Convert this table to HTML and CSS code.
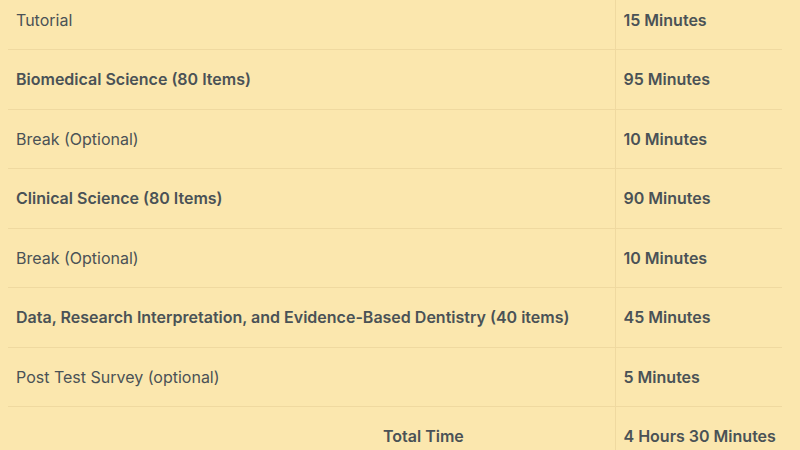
FILE: index.html
```html
<!DOCTYPE html>
<html>
<head>
<meta charset="utf-8">
<link rel="stylesheet" href="styles.css">
</head>
<body>
<table class="schedule">
  <tr><td class="item">Tutorial</td><td class="time">15 Minutes</td></tr>
  <tr><td class="item strong">Biomedical Science (80 Items)</td><td class="time">95 Minutes</td></tr>
  <tr><td class="item">Break (Optional)</td><td class="time">10 Minutes</td></tr>
  <tr><td class="item strong">Clinical Science (80 Items)</td><td class="time">90 Minutes</td></tr>
  <tr><td class="item">Break (Optional)</td><td class="time">10 Minutes</td></tr>
  <tr><td class="item strong">Data, Research Interpretation, and Evidence-Based Dentistry (40 items)</td><td class="time">45 Minutes</td></tr>
  <tr><td class="item">Post Test Survey (optional)</td><td class="time">5 Minutes</td></tr>
  <tr><td class="item strong total">Total Time</td><td class="time">4 Hours 30 Minutes</td></tr>
</table>
</body>
</html>
```
FILE: styles.css
```css
html, body {
  margin: 0;
  padding: 0;
  background: #fbe7ae;
  overflow: hidden;
  height: 450px;
}
body {
  padding: 0 18px 0 8px;
  font-family: "Inter", "Liberation Sans", sans-serif;
  color: #4a5256;
}
.schedule {
  width: 774px;
  border-collapse: collapse;
  margin-top: -10px;
  table-layout: fixed;
}
.schedule td {
  height: 59.5px;
  padding: 0 8px;
  font-size: 16px;
  border-bottom: 1px solid #efd9a0;
  vertical-align: middle;
  box-sizing: border-box;
  white-space: nowrap;
}
.item {
  width: 607px;
  border-right: 1px solid #efd9a0;
}
.strong {
  font-weight: 600;
}
.time {
  font-weight: 600;
  padding-right: 0 !important;
  overflow: visible;
}
.total {
  padding-left: 375px !important;
}
```
